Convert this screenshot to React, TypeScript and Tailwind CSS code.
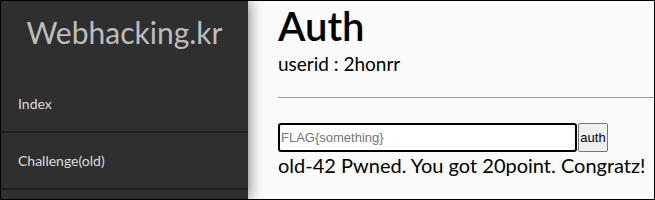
export default function App() {
  return (
    <div
      className="w-[655px] h-[200px] box-border border border-black overflow-hidden flex bg-[#fafafa]"
      style={{ fontFamily: 'Lato, "Noto Sans", sans-serif' }}
    >
      <aside className="w-[247px] shrink-0 bg-[#2f2f2f] flex flex-col shadow-[2px_0_12px_rgba(0,0,0,0.45)] z-10">
        <div className="h-[75px] flex items-center justify-center pb-[14px]">
          <span className="text-[30px] text-[#bdbdbd] leading-none">Webhacking.kr</span>
        </div>
        <a className="h-[57px] flex items-center pl-[17px] text-[14px] text-[#dddddd] border-b-2 border-[#1e1e1e]">
          Index
        </a>
        <a className="h-[57px] flex items-center pl-[17px] text-[14px] text-[#dddddd] border-b-2 border-[#1e1e1e]">
          Challenge(old)
        </a>
      </aside>

      <main className="flex-1 pl-[30px]">
        <h1 className="text-[40px] font-semibold leading-[50px] text-black">Auth</h1>
        <p className="text-[19px] leading-[25px] text-black">userid : 2honrr</p>
        <hr className="mt-[21px] border-t border-[#9a9a9a]" />
        <div className="mt-[25px] flex items-center">
          <input
            type="text"
            placeholder="FLAG{something}"
            className="w-[299px] h-[29px] border-2 border-black rounded-[3px] bg-white px-[1px] text-[13px] placeholder:text-[#757575] outline-none"
            style={{ fontFamily: '"Liberation Sans", Arial, sans-serif' }}
          />
          <button
            className="ml-[1px] w-[30px] h-[29px] bg-[#efefef] border border-[#767676] rounded-[2px] text-[13px] text-black"
            style={{ fontFamily: '"Liberation Sans", Arial, sans-serif' }}
          >
            auth
          </button>
        </div>
        <p className="text-[20px] leading-[27px] text-black">old-42 Pwned. You got 20point. Congratz!</p>
      </main>
    </div>
  );
}
